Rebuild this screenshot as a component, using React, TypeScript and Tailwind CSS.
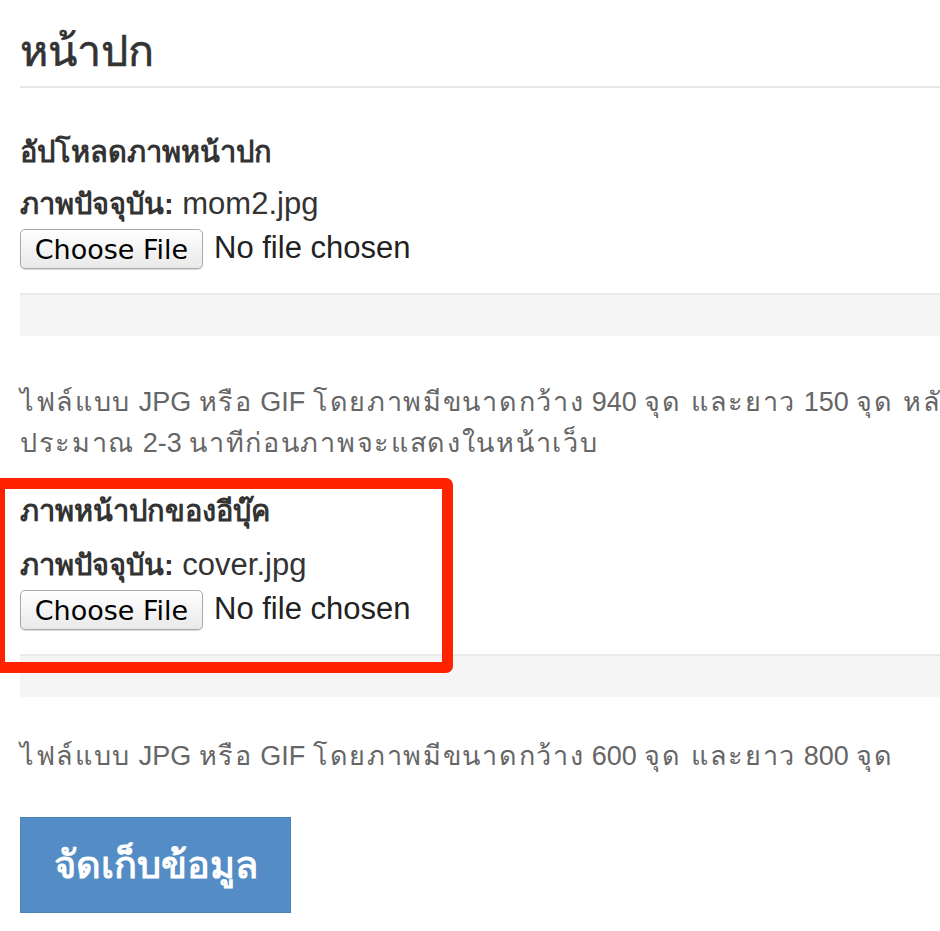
import React from "react";

function T({ children }: { children: React.ReactNode }) {
  return <span className="tracking-[1.7px]">{children}</span>;
}

function FileRow({ title, current, gap }: { title: string; current: string; gap: string }) {
  return (
    <div>
      <div className="text-[29px] leading-[40px] font-bold text-[#333]">{title}</div>
      <div className={`${gap} text-[29px] leading-[36px] text-[#333]`}>
        <span className="font-bold">ภาพปัจจุบัน:</span>
        <span className="text-[31px]"> {current}</span>
      </div>
      <div className="mt-[6px] flex items-center h-[41px]">
        <button className="h-[40px] w-[183px] rounded-[5px] border border-[#a9a9a9] bg-gradient-to-b from-white to-[#e9e9e9] text-[27px] text-black shadow-[0_1px_1px_rgba(0,0,0,0.15)] [font-family:'DejaVu_Sans',sans-serif]">
          Choose File
        </button>
        <span className="ml-[11px] text-[31px] text-[#222]">No file chosen</span>
      </div>
      <div className="mt-[24px] h-[43px] bg-[#f5f5f5] border-t-2 border-[#ebebeb]" />
    </div>
  );
}

export default function App() {
  return (
    <div className="relative w-[940px] h-[931px] overflow-hidden bg-white [font-family:'Liberation_Sans','Noto_Sans',sans-serif]">
      <div className="w-[1400px] pl-[20px]">
        <h1 className="pt-[24px] pb-[8px] text-[43px] leading-[54px] text-[#333] border-b-2 border-[#e8e8e8] [-webkit-text-stroke:0.6px_#333]">
          หน้าปก
        </h1>
        <div className="mt-[44px]">
          <FileRow title="อัปโหลดภาพหน้าปก" current="mom2.jpg" gap="mt-[14px]" />
        </div>
        <p className="mt-[46px] text-[27px] leading-[41px] text-[#666] whitespace-nowrap">
          <T>ไฟล์แบบ</T> JPG <T>หรือ</T> GIF <T>โดยภาพมีขนาดกว้าง</T> 940 <T>จุด และยาว</T> 150 <T>จุด หลังจากอัปโหลดแล้วอาจต้องรอ</T>
          <br />
          <T>ประมาณ</T> 2-3 <T>นาทีก่อนภาพจะแสดงในหน้าเว็บ</T>
        </p>
        <div className="mt-[27px]">
          <FileRow title="ภาพหน้าปกของอีบุ๊ค" current="cover.jpg" gap="mt-[16px]" />
        </div>
        <p className="mt-[39px] text-[27px] leading-[41px] text-[#666] whitespace-nowrap">
          <T>ไฟล์แบบ</T> JPG <T>หรือ</T> GIF <T>โดยภาพมีขนาดกว้าง</T> 600 <T>จุด และยาว</T> 800 <T>จุด</T>
        </p>
        <button className="mt-[40px] w-[271px] h-[96px] bg-[#548dc5] border border-[#4a82ba] text-white text-[38px] font-bold">
          จัดเก็บข้อมูล
        </button>
      </div>
      <div className="absolute left-[-6px] top-[478px] w-[459px] h-[195px] border-[11px] border-[#ff2200] rounded-[7px] pointer-events-none" />
    </div>
  );
}
